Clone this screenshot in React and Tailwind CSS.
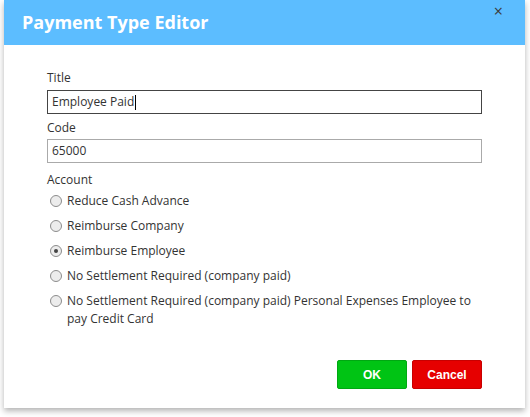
import React from "react";

const Radio = ({ checked, label }) => (
  <label className="flex items-start gap-[5px] leading-[18px]">
    <span className="mt-[3px] flex h-[12px] w-[12px] shrink-0 items-center justify-center rounded-full border border-[#8c8c8c] bg-[#ececec]">
      {checked ? <span className="h-[4px] w-[4px] rounded-full bg-[#444]" /> : null}
    </span>
    <span>{label}</span>
  </label>
);

export default function App() {
  return (
    <div className="h-[417px] w-[530px] bg-white pl-[4px] text-[#333]" style={{ fontFamily: '"Open Sans", sans-serif' }}>
      <div className="relative flex h-[408px] w-[521px] flex-col bg-white shadow-[0_3px_6px_rgba(0,0,0,0.3)]">
        <div className="flex h-[45px] items-center bg-[#5cbdff] pl-[18px]">
          <span className="text-[18px] font-bold text-white">Payment Type Editor</span>
          <span className="absolute right-[22px] top-[3px] text-[16px] leading-[16px] text-[#3a3a3a]">×</span>
        </div>
        <div className="flex flex-1 flex-col px-[43px] pt-[25px] text-[12px]">
          <div className="leading-[16px]">Title</div>
          <div className="mt-[4px] flex h-[24px] items-center border border-[#444] px-[4px]">
            <span>Employee Paid</span>
            <span className="ml-[1px] h-[15px] w-[1px] bg-black" />
          </div>
          <div className="mt-[6px] leading-[16px]">Code</div>
          <div className="mt-[3px] flex h-[24px] items-center border border-[#aaa] px-[4px]">65000</div>
          <div className="mt-[9px] leading-[16px]">Account</div>
          <div className="mt-[4px] flex flex-col gap-[7px] pl-[3px]">
            <Radio label="Reduce Cash Advance" />
            <Radio label="Reimburse Company" />
            <Radio checked label="Reimburse Employee" />
            <Radio label="No Settlement Required (company paid)" />
            <Radio label="No Settlement Required (company paid) Personal Expenses Employee to pay Credit Card" />
          </div>
          <div className="mt-auto mb-[19px] flex justify-end gap-[5px]">
            <button className="h-[29px] w-[70px] rounded-[2px] border border-[#00a812] bg-[#00c414] text-[12px] font-bold text-white" style={{ fontFamily: '"Liberation Sans", sans-serif' }}>OK</button>
            <button className="h-[29px] w-[70px] rounded-[2px] border border-[#c80000] bg-[#e60000] text-[12px] font-bold text-white" style={{ fontFamily: '"Liberation Sans", sans-serif' }}>Cancel</button>
          </div>
        </div>
      </div>
    </div>
  );
}
